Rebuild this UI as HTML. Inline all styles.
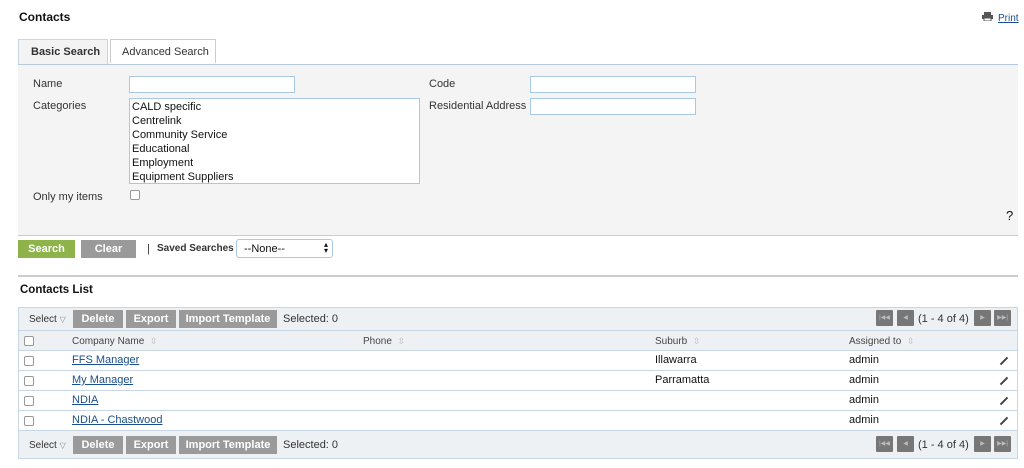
<!DOCTYPE html>
<html><head><style>
*{box-sizing:border-box;margin:0;padding:0}
body{width:1024px;height:468px;background:#fff;font-family:"Liberation Sans",Arial,sans-serif;font-size:11px;color:#333;position:relative;overflow:hidden}
.a{position:absolute}
.in{position:absolute;background:#fff;border:1px solid #a9c8e6;height:17px}
.btn{position:absolute;height:18px;background:#9a9a9a;color:#fff;font-weight:bold;font-size:11px;text-align:center;line-height:18px}
.cb{position:absolute;width:10px;height:10px;border:1px solid #999;border-radius:2px;background:#fff}
.row{position:absolute;left:19px;width:998px;height:20px;border-top:1px solid #c9d6e3;background:#fff}
.lnk{color:#1a4f8b;text-decoration:underline}
.pg{position:absolute;width:17px;height:16px;background:#777;border-radius:1px;color:#bbb;font-size:6px;text-align:center;line-height:16px}
.pen{position:absolute;right:8px;width:10px;height:2px;background:#444;transform:rotate(-45deg)}
.sort{color:#bbb;font-size:9px}
</style></head><body>
<div class="a" style="left:19px;top:10px;font-weight:bold;font-size:12px;color:#111">Contacts</div>
<svg class="a" style="left:982px;top:12px" width="11" height="9"><rect x="2" y="0" width="7" height="3" fill="#555"/><rect x="0" y="3" width="11" height="4" fill="#555"/><rect x="2" y="6" width="7" height="3" fill="#fff" stroke="#555"/></svg>
<div class="a lnk" style="left:998px;top:13px;font-size:10px">Print</div>
<div class="a" style="left:18px;top:39px;width:90px;height:26px;background:#f3f3f3;border:1px solid #c9d6e3;border-bottom:none;font-weight:bold;padding:6px 0 0 12px">Basic Search</div>
<div class="a" style="left:110px;top:39px;width:106px;height:24px;background:#fff;border:1px solid #ccc;border-bottom:none;padding:6px 0 0 11px">Advanced Search</div>
<div class="a" style="left:18px;top:64px;width:1000px;height:172px;background:#f4f4f4;border-top:1px solid #b5c9dc"></div>
<div class="a" style="left:33px;top:78px">Name</div>
<div class="in" style="left:129px;top:76px;width:166px"></div>
<div class="a" style="left:33px;top:100px">Categories</div>
<div class="a" style="left:129px;top:98px;width:291px;height:86px;background:#fff;border:1px solid #a9c8e6;padding:1px 2px;line-height:14px;color:#111">CALD specific<br>Centrelink<br>Community Service<br>Educational<br>Employment<br>Equipment Suppliers</div>
<div class="a" style="left:429px;top:78px">Code</div>
<div class="in" style="left:530px;top:76px;width:166px"></div>
<div class="a" style="left:429px;top:100px">Residential Address</div>
<div class="in" style="left:530px;top:98px;width:166px"></div>
<div class="a" style="left:33px;top:191px">Only my items</div>
<div class="cb" style="left:130px;top:190px"></div>
<div class="a" style="left:1006px;top:208px;font-size:13px;color:#111">?</div>
<div class="a" style="left:18px;top:235px;width:1000px;height:1px;background:#ccc"></div>
<div class="btn" style="left:18px;top:240px;width:57px;background:#8db34a">Search</div>
<div class="btn" style="left:81px;top:240px;width:55px">Clear</div>
<div class="a" style="left:147px;top:243px">|</div>
<div class="a" style="left:157px;top:243px;font-weight:bold;font-size:10px">Saved Searches</div>
<div class="a" style="left:236px;top:239px;width:97px;height:19px;background:#fff;border:1px solid #a9c8e6;border-radius:3px;padding:3px 0 0 7px;color:#111">--None--<span style="position:absolute;right:4px;top:2px;font-size:8px;line-height:6px">▴<br>▾</span></div>
<div class="a" style="left:18px;top:275px;width:1000px;height:2px;background:#ccc"></div>
<div class="a" style="left:20px;top:284px;font-weight:bold;font-size:11.5px;color:#111">Contacts List</div>
<div class="a" style="left:18px;top:307px;width:1000px;height:152px;background:#eef1f4;border:1px solid #c9d6e3"></div>
<div class="a" style="left:29px;top:314px;font-size:10px">Select <span style="color:#888;font-size:8px">▽</span></div>
<div class="btn" style="left:73px;top:310px;width:50px">Delete</div>
<div class="btn" style="left:126px;top:310px;width:50px">Export</div>
<div class="btn" style="left:179px;top:310px;width:98px">Import Template</div>
<div class="a" style="left:283px;top:313px">Selected: 0</div>
<div class="pg" style="left:876px;top:310px">|◀◀</div><div class="pg" style="left:897px;top:310px">◀</div>
<div class="a" style="left:918px;top:313px">(1 - 4 of 4)</div>
<div class="pg" style="left:974px;top:310px">▶</div><div class="pg" style="left:994px;top:310px">▶▶|</div>
<div class="row" style="top:330px;background:#eef1f4;color:#444;font-size:10px">
<div class="cb" style="left:5px;top:5px"></div>
<div class="a" style="left:53px;top:5px">Company Name &nbsp;<span class="sort">⇳</span></div>
<div class="a" style="left:344px;top:5px">Phone &nbsp;<span class="sort">⇳</span></div>
<div class="a" style="left:636px;top:5px">Suburb &nbsp;<span class="sort">⇳</span></div>
<div class="a" style="left:830px;top:5px">Assigned to &nbsp;<span class="sort">⇳</span></div></div>
<div class="row" style="top:350px"><div class="cb" style="left:5px;top:5px"></div><div class="a lnk" style="left:53px;top:3px">FFS Manager</div><div class="a" style="left:636px;top:3px;color:#111">Illawarra</div><div class="a" style="left:830px;top:3px;color:#111">admin</div><div class="pen" style="top:9px"></div></div>
<div class="row" style="top:370px"><div class="cb" style="left:5px;top:5px"></div><div class="a lnk" style="left:53px;top:3px">My Manager</div><div class="a" style="left:636px;top:3px;color:#111">Parramatta</div><div class="a" style="left:830px;top:3px;color:#111">admin</div><div class="pen" style="top:9px"></div></div>
<div class="row" style="top:390px"><div class="cb" style="left:5px;top:5px"></div><div class="a lnk" style="left:53px;top:3px">NDIA</div><div class="a" style="left:830px;top:3px;color:#111">admin</div><div class="pen" style="top:9px"></div></div>
<div class="row" style="top:410px"><div class="cb" style="left:5px;top:5px"></div><div class="a lnk" style="left:53px;top:3px">NDIA - Chastwood</div><div class="a" style="left:830px;top:3px;color:#111">admin</div><div class="pen" style="top:9px"></div></div>
<div class="a" style="left:19px;top:430px;width:998px;height:1px;background:#c9d6e3"></div>
<div class="a" style="left:29px;top:440px;font-size:10px">Select <span style="color:#888;font-size:8px">▽</span></div>
<div class="btn" style="left:73px;top:436px;width:50px">Delete</div>
<div class="btn" style="left:126px;top:436px;width:50px">Export</div>
<div class="btn" style="left:179px;top:436px;width:98px">Import Template</div>
<div class="a" style="left:283px;top:439px">Selected: 0</div>
<div class="pg" style="left:876px;top:436px">|◀◀</div><div class="pg" style="left:897px;top:436px">◀</div>
<div class="a" style="left:918px;top:439px">(1 - 4 of 4)</div>
<div class="pg" style="left:974px;top:436px">▶</div><div class="pg" style="left:994px;top:436px">▶▶|</div>
</body></html>
